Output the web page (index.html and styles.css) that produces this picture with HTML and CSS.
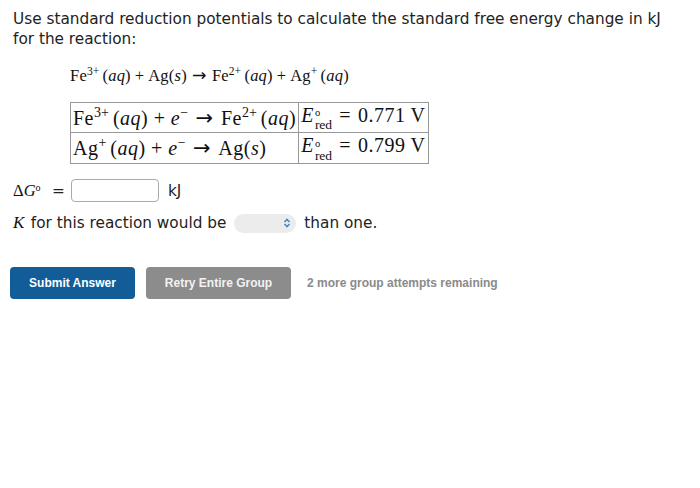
FILE: index.html
```html
<!DOCTYPE html>
<html>
<head>
<meta charset="utf-8">
<link rel="stylesheet" href="styles.css">
</head>
<body>
<div class="page">
  <p class="prompt">Use standard reduction potentials to calculate the standard free energy change in kJ for the reaction:</p>
  <div class="math eq">Fe<sup>3+</sup><span class="sp"></span>(<i>aq</i>)<span class="bin">+</span>Ag(<i>s</i>)<span class="rel arr">→</span>Fe<sup>2+</sup><span class="sp"></span>(<i>aq</i>)<span class="bin">+</span>Ag<sup>+</sup><span class="sp"></span>(<i>aq</i>)</div>
  <table class="math pot">
    <tr>
      <td>Fe<sup>3+</sup><span class="sp"></span>(<i>aq</i>)<span class="bin">+</span><i>e</i><sup>−</sup><span class="rel arr">→</span>Fe<sup>2+</sup><span class="sp"></span>(<i>aq</i>)</td>
      <td><i>E</i><span class="ss"><span class="o">o</span><span class="r">red</span></span><span class="rel">=</span>0.771 V</td>
    </tr>
    <tr>
      <td>Ag<sup>+</sup><span class="sp"></span>(<i>aq</i>)<span class="bin">+</span><i>e</i><sup>−</sup><span class="rel arr">→</span>Ag(<i>s</i>)</td>
      <td><i>E</i><span class="ss"><span class="o">o</span><span class="r">red</span></span><span class="rel">=</span>0.799 V</td>
    </tr>
  </table>
  <div class="row dg">
    <span class="math dgl">Δ<i>G</i><sup class="deg">o</sup></span>
    <span class="eqs">=</span>
    <span class="input"></span>
    <span class="unit">kJ</span>
  </div>
  <div class="row kr">
    <span class="math k"><i>K</i></span>
    <span>for this reaction would be</span>
    <span class="select"><svg width="8" height="10" viewBox="0 0 8 10"><path d="M1.5 4 L4 1.5 L6.5 4 M1.5 6 L4 8.5 L6.5 6" fill="none" stroke="#4a86c5" stroke-width="1.6"/></svg></span>
    <span>than one.</span>
  </div>
  <div class="actions">
    <button class="btn submit">Submit Answer</button>
    <button class="btn retry">Retry Entire Group</button>
    <span class="remain">2 more group attempts remaining</span>
  </div>
</div>
</body>
</html>
```

FILE: styles.css
```css
html, body { margin: 0; padding: 0; background: #fff; }
.page {
  font-family: "DejaVu Sans", Verdana, sans-serif;
  font-size: 15.3px;
  color: #222;
  padding: 9px 13px;
}
.prompt { margin: 0; line-height: 20px; width: 660px; }
.math { font-family: "Liberation Serif", "DejaVu Serif", serif; color: #111; letter-spacing: 0.5px; }
.math i { font-style: italic; }
.math sup { font-size: 0.7em; vertical-align: 0.55em; line-height: 0; letter-spacing: 0; }
.sp { display: inline-block; width: 0.2em; }
.bin { margin: 0 0.27em; }
.rel { margin: 0 0.35em; }
.arr { font-family: "DejaVu Sans", sans-serif; font-size: 1.05em; }
.eq { margin: 16px 0 0 57px; font-size: 16.5px; line-height: 20px; letter-spacing: 0.2px; }
.eq .bin { margin: 0 0.24em; }
.eq .rel { margin: 0 0.3em; }
.pot {
  margin: 16px 0 0 57px;
  border-collapse: collapse;
  font-size: 20px;
  border: 1px solid #999;
}
.pot td {
  border: 1px solid #999;
  padding: 0 2px 0 2px;
  height: 30px;
  white-space: nowrap;
  line-height: 22px;
}
.pot tr:first-child td { height: 29px; }
.ss {
  display: inline-block;
  vertical-align: -0.36em;
  margin-left: 1px;
  text-align: left;
  letter-spacing: 0;
  line-height: 0;
}
.ss .o { display: block; font-size: 10.5px; line-height: 12px; height: 12px; }
.ss .r { display: block; font-size: 13.5px; line-height: 12px; height: 12px; }
.row { display: flex; align-items: center; }
.dg { margin-top: 15px; height: 23px; }
.dgl { font-size: 16.5px; width: 39px; letter-spacing: 0; }
.deg { font-size: 10px !important; }
.eqs { width: 19px; }
.input {
  width: 86px; height: 21px;
  border: 1px solid #aaa;
  border-radius: 4px;
  margin-right: 9px;
}
.kr { margin-top: 10px; height: 22px; }
.k { font-size: 17px; margin-right: 6px; }
.select {
  margin: 0 8px 0 8px;
  width: 62px; height: 19px;
  background: #ececec;
  border-radius: 10px;
  display: flex; align-items: center; justify-content: flex-end;
  padding-right: 5px;
  box-sizing: border-box;
}
.actions { display: flex; align-items: center; margin-top: 33px; margin-left: -3px; }
.btn {
  font-family: "Liberation Sans", Arial, sans-serif;
  font-weight: bold;
  font-size: 12px;
  color: #fff;
  border: none;
  border-radius: 4px;
  height: 32px;
  padding: 0;
}
.submit { background: #125d98; width: 125px; }
.retry { background: #8c8c8c; width: 145px; margin-left: 11px; color: #f2f2f2; }
.remain {
  font-family: "Liberation Sans", Arial, sans-serif;
  font-weight: bold; font-size: 12px; color: #8a8a8a;
  margin-left: 16px;
}
```
